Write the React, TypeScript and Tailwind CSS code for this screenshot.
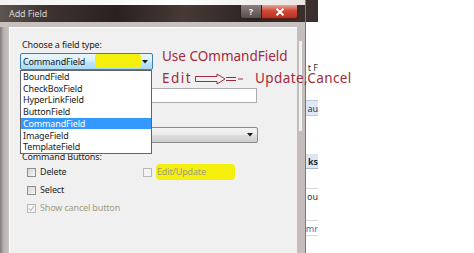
const ui = { fontFamily: '"Noto Sans", "Open Sans", sans-serif' };
const hand = { fontFamily: '"Comic Sans MS", "Noto Sans", sans-serif' };

const fieldTypes = [
  "BoundField",
  "CheckBoxField",
  "HyperLinkField",
  "ButtonField",
  "CommandField",
  "ImageField",
  "TemplateField",
];

const Arrow = () => (
  <svg width="6" height="4" viewBox="0 0 6 4" className="block">
    <path d="M0 0 H6 L3 3.5 Z" fill="#1a1a1a" />
  </svg>
);

const CheckBox = ({
  label,
  checked = false,
  disabled = false,
  marked = false,
}: {
  label: string;
  checked?: boolean;
  disabled?: boolean;
  marked?: boolean;
}) => (
  <div className="flex items-center h-[18px] gap-[4px]">
    <div
      className={`w-[9px] h-[9px] border flex items-center justify-center ${
        disabled
          ? "border-[#b8b8b8] bg-[#f4f4f4]"
          : "border-[#8e8f8f] bg-[linear-gradient(135deg,#d6d6d6,#f6f6f6)]"
      }`}
    >
      {checked && (
        <svg width="7" height="7" viewBox="0 0 7 7">
          <path
            d="M1 3.6 L2.8 5.6 L6 1"
            fill="none"
            stroke="#a8a8a8"
            strokeWidth="1"
          />
        </svg>
      )}
    </div>
    <span
      className={`text-[9px] leading-[12px] tracking-[-0.15px] ${
        disabled ? "text-[#a09d80]" : "text-[#1e1e1e]"
      } ${
        marked
          ? "bg-[#f4ef0c] rounded-[4px] pl-[1px] pr-[29px] py-[2px] text-[#9d9a6c]"
          : ""
      }`}
    >
      {label}
    </span>
  </div>
);

export default function App() {
  return (
    <div
      className="relative w-[474px] h-[253px] overflow-hidden bg-white flex"
      style={ui}
    >
      {/* dialog window */}
      <div className="w-[305px] flex flex-col shrink-0">
        <div className="h-[5px] bg-[linear-gradient(90deg,#f4f2f2,#ffffff_60%,#e8e4e4)]" />
        <div className="h-[17px] flex items-start justify-between pr-[7px] bg-[linear-gradient(90deg,#5e5450_0%,#3f3431_14%,#2a2120_38%,#473a36_60%,#2e2523_82%,#3a2e2b_100%)]">
          <span className="pl-[9px] pt-[3px] text-[9px] leading-[11px] tracking-[-0.1px] text-[#dcd6d4]">
            Add Field
          </span>
          <div className="flex h-[14px]">
            <div className="w-[22px] h-full flex items-center justify-center rounded-bl-[3px] border border-t-0 border-[#2a2220] bg-[linear-gradient(180deg,#8a7f7c,#5a4f4c)] text-[9px] font-bold text-[#eeeeee]">
              ?
            </div>
            <div className="w-[36px] h-full flex items-center justify-center rounded-br-[3px] border border-t-0 border-l-0 border-[#5a1e16] bg-[linear-gradient(180deg,#e8a49a,#cf4a38_45%,#b8301f)]">
              <svg width="10" height="8" viewBox="0 0 10 8">
                <path
                  d="M1.5 0.8 L8.5 7.2 M8.5 0.8 L1.5 7.2"
                  stroke="#ffffff"
                  strokeWidth="2"
                />
              </svg>
            </div>
          </div>
        </div>
        <div className="h-[5px] bg-[#c6c0bf]" />
        <div className="flex-1 flex">
          <div className="w-[9px] bg-[linear-gradient(90deg,#7f7a7a,#b6b0b0_40%,#c8c2c1)]" />

          {/* client area */}
          <div className="relative flex-1 bg-[#f0f0f0] border-l border-t border-white flex flex-col pl-[10px]">
            <div className="mt-[11px] ml-[2px] h-[12px] text-[9px] leading-[12px] tracking-[-0.15px] text-[#1e1e1e]">
              Choose a field type:
            </div>
            <div className="relative mt-[2px] w-[133px] h-[17px] flex items-center justify-between rounded-[2px] border border-[#3c7fb1] bg-[linear-gradient(180deg,#eaf6fd_0%,#d9f0fc_45%,#bee6fd_55%,#a7d9f5_100%)] pl-[2px] pr-[4px]">
              <span className="text-[9px] leading-[12px] tracking-[-0.15px] text-[#1a1a1a]">
                CommandField
              </span>
              <div className="absolute left-[74px] top-[0px] w-[46px] h-[14px] rounded-[3px] bg-[#f4ef0c]" />
              <Arrow />
            </div>

            <div className="mt-[18px] w-[237px] h-[15px] border border-[#abadb3] bg-white" />

            <div className="mt-[24px] w-[238px] h-[16px] flex items-center justify-end pr-[4px] rounded-[2px] border border-[#8a8a8a] bg-[linear-gradient(180deg,#f3f3f3_0%,#ebebeb_48%,#dddddd_52%,#cfcfcf_100%)]">
              <Arrow />
            </div>

            <div className="mt-[8px] ml-[2px] h-[12px] text-[9px] leading-[12px] tracking-[-0.15px] text-[#1e1e1e]">
              Command Buttons:
            </div>

            <div className="grid grid-cols-[116px_1fr] pl-[7px]">
              <CheckBox label="Delete" />
              <CheckBox label="Edit/Update" disabled marked />
              <CheckBox label="Select" />
              <div />
              <CheckBox label="Show cancel button" checked disabled />
            </div>

            {/* open dropdown list */}
            <div className="absolute left-[10px] top-[42px] w-[132px] border border-[#646464] bg-white flex flex-col">
              {fieldTypes.map((t) => (
                <div
                  key={t}
                  className={`h-[11.7px] flex items-center pl-[2px] text-[9px] tracking-[-0.15px] ${
                    t === "CommandField"
                      ? "bg-[#3399ff] text-white"
                      : "text-[#1a1a1a]"
                  }`}
                >
                  {t}
                </div>
              ))}
            </div>
          </div>

          <div className="w-[8px] flex flex-col bg-[#c4bdbc]">
            <div className="h-[14px]" />
            <div className="h-[90px] ml-[2px] w-[3px] bg-[#f2f0f0]" />
          </div>
        </div>
      </div>

      {/* edge of the page behind the dialog */}
      <div className="w-[13px] shrink-0 flex flex-col text-[9px] leading-[11px] border-l border-[#7c7676]">
        <div className="h-[22px] bg-[#3a2f2c]" />
        <div className="h-[40px]" />
        <div className="h-[12px] flex justify-end overflow-hidden whitespace-nowrap text-[#333]">
          t F
        </div>
        <div className="h-[26px]" />
        <div className="h-[16px] flex items-center justify-end overflow-hidden whitespace-nowrap bg-[#dfe9f5] border-y border-[#b9c9dd] text-[#2a3a4a]">
          au
        </div>
        <div className="h-[38px]" />
        <div className="h-[15px] flex items-center justify-end overflow-hidden whitespace-nowrap bg-[#dde6f1] border-b border-[#a8b8cc] font-bold text-[#1d2b3a]">
          ks
        </div>
        <div className="h-[20px] border-b border-[#d8d8d8]" />
        <div className="h-[14px] flex items-center justify-end overflow-hidden whitespace-nowrap text-[#333]">
          ou
        </div>
        <div className="h-[18px] border-b border-[#d8d8d8]" />
        <div className="h-[14px] flex items-center justify-end overflow-hidden whitespace-nowrap text-[#3a6ea8]">
          mr
        </div>
        <div className="flex-1 border-t border-[#d8d8d8]" />
      </div>
      <div className="flex-1" />

      {/* handwritten notes */}
      <div
        className="absolute left-[162px] top-[47px] text-[13.5px] leading-[18px] text-[#a12a3e] whitespace-nowrap"
        style={hand}
      >
        Use COmmandField
      </div>
      <div
        className="absolute left-[162px] top-[69px] flex items-center text-[13.5px] leading-[18px] text-[#a12a3e] whitespace-nowrap"
        style={hand}
      >
        <span className="w-[31px] tracking-[1.5px]">Edit</span>
        <svg width="50" height="12" viewBox="0 0 50 12" className="ml-[2px] mt-[2px]">
          <path
            d="M0.5 3.5 H22 V1 L30 6 L22 11 V8.5 H0.5 Z"
            fill="none"
            stroke="#a12a3e"
            strokeWidth="1"
          />
          <path d="M31 4.5 H41 M31 7.5 H41 M43 6 H48" stroke="#a12a3e" strokeWidth="1" />
        </svg>
        <span className="ml-[10px] tracking-[0.4px]">Update,Cancel</span>
      </div>
    </div>
  );
}
